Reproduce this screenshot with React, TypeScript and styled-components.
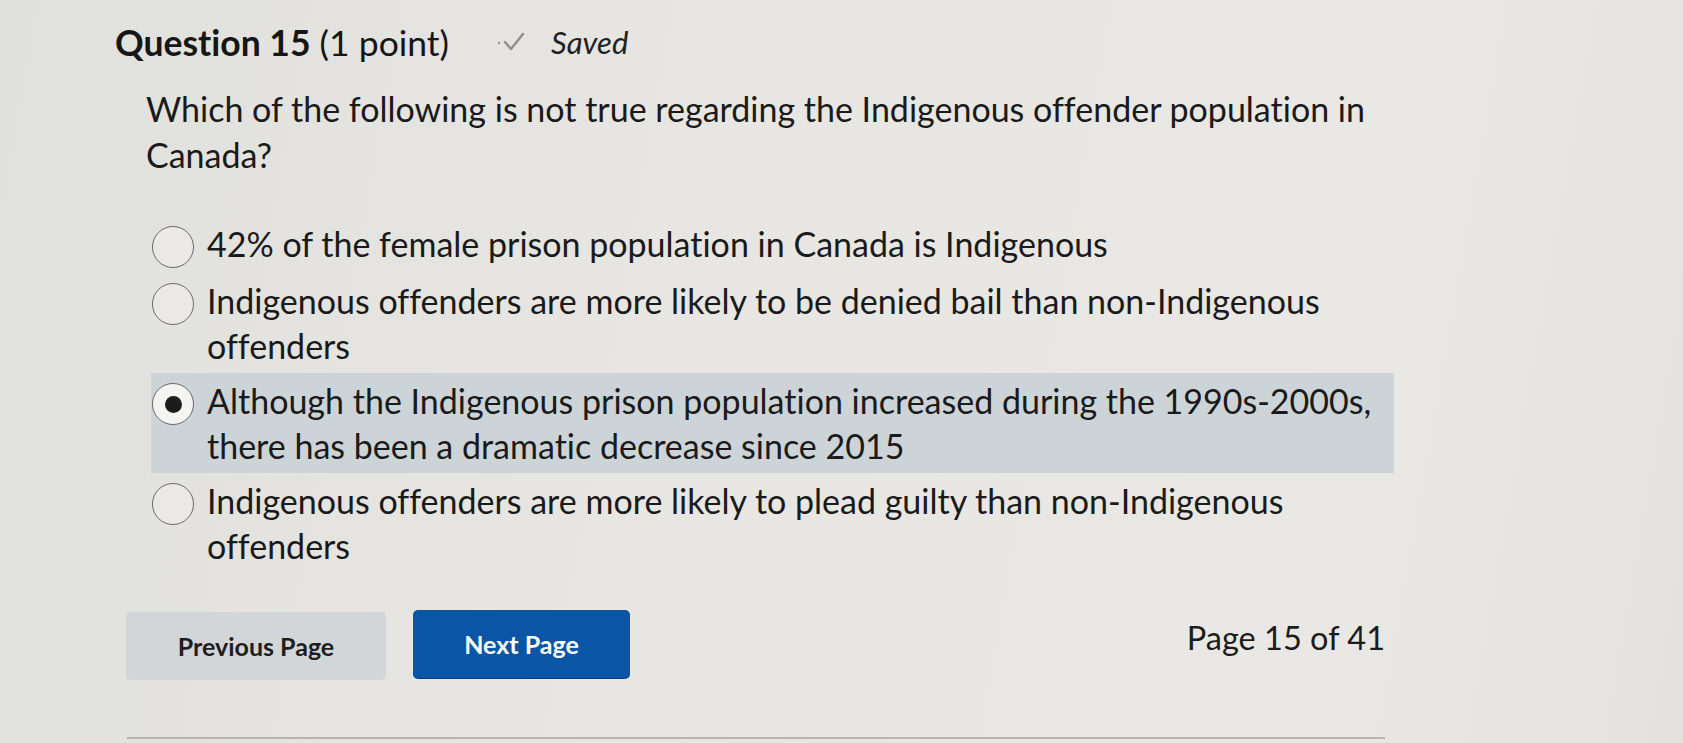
import React from "react";
import styled, { createGlobalStyle } from "styled-components";

const Global = createGlobalStyle`
  html, body { margin: 0; padding: 0; }
  body {
    background: #e6e5e1;
    font-family: Lato, "Noto Sans", sans-serif;
    font-variant-ligatures: none;
    color: #1c1c1c;
  }
`;

const Page = styled.main`
  width: 1683px;
  height: 743px;
  box-sizing: border-box;
  padding: 18px 0 0 115px;
  background: linear-gradient(100deg, #e0e0dc 0%, #e7e6e2 40%, #e9e8e4 80%, #e3e2de 100%);
  overflow: hidden;
`;

const Content = styled.div`
  width: 1280px;
  display: flex;
  flex-direction: column;
`;

const Header = styled.header`
  display: flex;
  align-items: center;
  height: 48px;
`;

const Title = styled.h1`
  margin: 0;
  font-size: 35.5px;
  font-weight: 400;
  color: #161616;
  b { font-weight: 700; }
`;

const SavedStatus = styled.span`
  display: flex;
  align-items: center;
  gap: 22px;
  margin-left: 48px;
  font-size: 31px;
  font-style: italic;
  color: #222;
`;

const Body = styled.section`
  padding-left: 31px;
  margin-top: 20px;
`;

const Prompt = styled.p`
  margin: 0;
  font-size: 34px;
  line-height: 46px;
  color: #1a1a1a;
`;

const Options = styled.div`
  margin-top: 38px;
  margin-left: 36px;
  width: 1243px;
  display: flex;
  flex-direction: column;
`;

const Option = styled.label<{ $selected?: boolean }>`
  display: flex;
  align-items: flex-start;
  gap: 13px;
  padding: 5px 0 5px 1px;
  background: ${(p) => (p.$selected ? "#ccd4d7" : "transparent")};
`;

const Radio = styled.span<{ $checked?: boolean }>`
  flex: none;
  width: 42px;
  height: 42px;
  margin-top: 5px;
  box-sizing: border-box;
  border-radius: 50%;
  border: 1.5px solid #6a6a6a;
  background: ${(p) => (p.$checked ? "#f4f4f2" : "#eae9e6")};
  display: flex;
  align-items: center;
  justify-content: center;
  &::after {
    content: "";
    display: ${(p) => (p.$checked ? "block" : "none")};
    width: 17px;
    height: 17px;
    border-radius: 50%;
    background: #1c1c1c;
  }
`;

const OptionText = styled.span`
  font-size: 34px;
  line-height: 45px;
  color: #1a1a1a;
  max-width: 1185px;
`;

const Footer = styled.div`
  display: flex;
  align-items: flex-start;
  margin-top: 37px;
  padding-left: 11px;
  gap: 27px;
`;

const Button = styled.button<{ $primary?: boolean }>`
  height: 68px;
  padding: 0;
  width: ${(p) => (p.$primary ? "217px" : "260px")};
  margin-top: ${(p) => (p.$primary ? "0" : "2px")};
  border: none;
  border-radius: 5px;
  font-family: Lato, "Noto Sans", sans-serif;
  font-variant-ligatures: none;
  font-weight: 700;
  font-size: 25px;
  color: ${(p) => (p.$primary ? "#ffffff" : "#1e1e1e")};
  background: ${(p) => (p.$primary ? "#0a55a6" : "#d3d6d9")};
  box-shadow: ${(p) => (p.$primary ? "0 1px 0 #08407f" : "none")};
`;

const PageCount = styled.span`
  margin-left: auto;
  margin-right: 10px;
  margin-top: 8px;
  font-size: 32.5px;
  color: #1c1c1c;
`;

const Rule = styled.hr`
  margin: 57px 0 0 12px;
  width: 1258px;
  border: none;
  border-top: 2px solid #b5b5b1;
`;

const options = [
  "42% of the female prison population in Canada is Indigenous",
  "Indigenous offenders are more likely to be denied bail than non-Indigenous offenders",
  "Although the Indigenous prison population increased during the 1990s-2000s, there has been a dramatic decrease since 2015",
  "Indigenous offenders are more likely to plead guilty than non-Indigenous offenders",
];

export default function App() {
  const selected = 2;
  return (
    <>
      <Global />
      <Page>
        <Content>
          <Header>
            <Title>
              <b>Question 15</b> (1 point)
            </Title>
            <SavedStatus>
              <svg width="32" height="24" viewBox="0 0 32 24" fill="none">
                <circle cx="2" cy="13" r="1.3" fill="#9a9a9a" />
                <path d="M8 12 L14 19 L26 4" stroke="#8e8e8e" strokeWidth="2.4" strokeLinecap="round" strokeLinejoin="round" />
              </svg>
              Saved
            </SavedStatus>
          </Header>
          <Body>
            <Prompt>
              Which of the following is not true regarding the Indigenous offender population in
              <br />
              Canada?
            </Prompt>
          </Body>
          <Options>
            {options.map((t, i) => (
              <Option key={i} $selected={i === selected}>
                <Radio $checked={i === selected} />
                <OptionText>{t}</OptionText>
              </Option>
            ))}
          </Options>
          <Footer>
            <Button>Previous Page</Button>
            <Button $primary>Next Page</Button>
            <PageCount>Page 15 of 41</PageCount>
          </Footer>
          <Rule />
        </Content>
      </Page>
    </>
  );
}
